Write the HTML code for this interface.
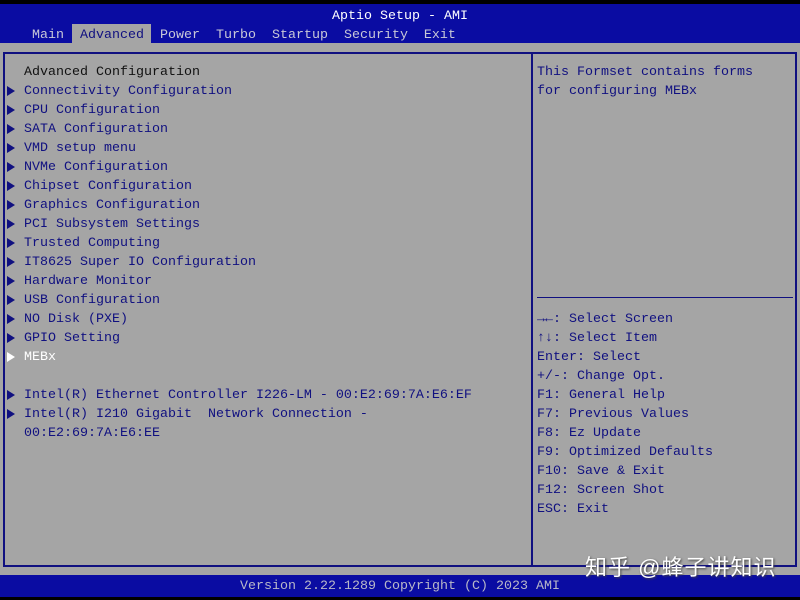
<!DOCTYPE html>
<html><head><style>
body{margin:0;width:800px;height:600px;background:#000;position:relative;overflow:hidden;font-family:"Liberation Mono",monospace;font-size:13.33px}
.top{position:absolute;left:0;top:4px;width:800px;height:39px;background:#0a0ca2}
.main{position:absolute;left:0;top:43px;width:800px;height:532px;background:#a5a5a5}
.bot{position:absolute;left:0;top:575px;width:800px;height:21px;background:#0a0ca2;color:#b8b8c8;text-align:center;line-height:21px;padding-top:1px}
.t{position:absolute;white-space:pre;line-height:19px}
.b{color:#101080}
.tab{position:absolute;top:24px;height:19px;line-height:19px;color:#c8c8d8;white-space:pre}
.tri{position:absolute;left:7px;width:0;height:0;border-top:5px solid transparent;border-bottom:5px solid transparent;border-left:8px solid #101080}
.box{position:absolute;border:2px solid #101080}
</style></head><body>
<div class="top"></div>
<div class="t" style="left:0;top:7px;width:800px;text-align:center;color:#fff">Aptio Setup - AMI</div>
<div class="main"></div>
<div class="tab" style="left:72px;width:79px;background:#a5a5a5"></div>
<div class="tab" style="left:32px;top:26px">Main  <span style="color:#101080">Advanced</span>  Power  Turbo  Startup  Security  Exit</div>
<div class="box" style="left:3px;top:52px;width:526px;height:511px"></div>
<div class="box" style="left:531px;top:52px;width:262px;height:511px"></div>
<div style="position:absolute;left:537px;top:297px;width:256px;height:1px;background:#101080"></div>
<div class="t" style="left:24px;top:63px;color:#111">Advanced Configuration</div>
<div class="t b" style="left:24px;top:82px">Connectivity Configuration
CPU Configuration
SATA Configuration
VMD setup menu
NVMe Configuration
Chipset Configuration
Graphics Configuration
PCI Subsystem Settings
Trusted Computing
IT8625 Super IO Configuration
Hardware Monitor
USB Configuration
NO Disk (PXE)
GPIO Setting
<span style="color:#fff">MEBx</span>

Intel(R) Ethernet Controller I226-LM - 00:E2:69:7A:E6:EF
Intel(R) I210 Gigabit  Network Connection -
00:E2:69:7A:E6:EE</div>
<div class="tri" style="top:86px"></div><div class="tri" style="top:105px"></div><div class="tri" style="top:124px"></div><div class="tri" style="top:143px"></div><div class="tri" style="top:162px"></div><div class="tri" style="top:181px"></div><div class="tri" style="top:200px"></div><div class="tri" style="top:219px"></div><div class="tri" style="top:238px"></div><div class="tri" style="top:257px"></div><div class="tri" style="top:276px"></div><div class="tri" style="top:295px"></div><div class="tri" style="top:314px"></div><div class="tri" style="top:333px"></div><div class="tri" style="top:352px;border-left-color:#fff"></div><div class="tri" style="top:390px"></div><div class="tri" style="top:409px"></div>
<div class="t b" style="left:537px;top:63px">This Formset contains forms
for configuring MEBx</div>
<div class="t b" style="left:537px;top:310px"><b>→←</b>: Select Screen
<b>↑↓</b>: Select Item
Enter: Select
+/-: Change Opt.
F1: General Help
F7: Previous Values
F8: Ez Update
F9: Optimized Defaults
F10: Save &amp; Exit
F12: Screen Shot
ESC: Exit</div>
<div class="bot">Version 2.22.1289 Copyright (C) 2023 AMI</div>
<div style="position:absolute;left:585px;top:550px;color:#fff;font-family:'Liberation Sans','Noto Sans CJK SC',sans-serif;font-size:22px;letter-spacing:1px;text-shadow:1px 1px 2px #444">知乎 @蜂子讲知识</div>
</body></html>
